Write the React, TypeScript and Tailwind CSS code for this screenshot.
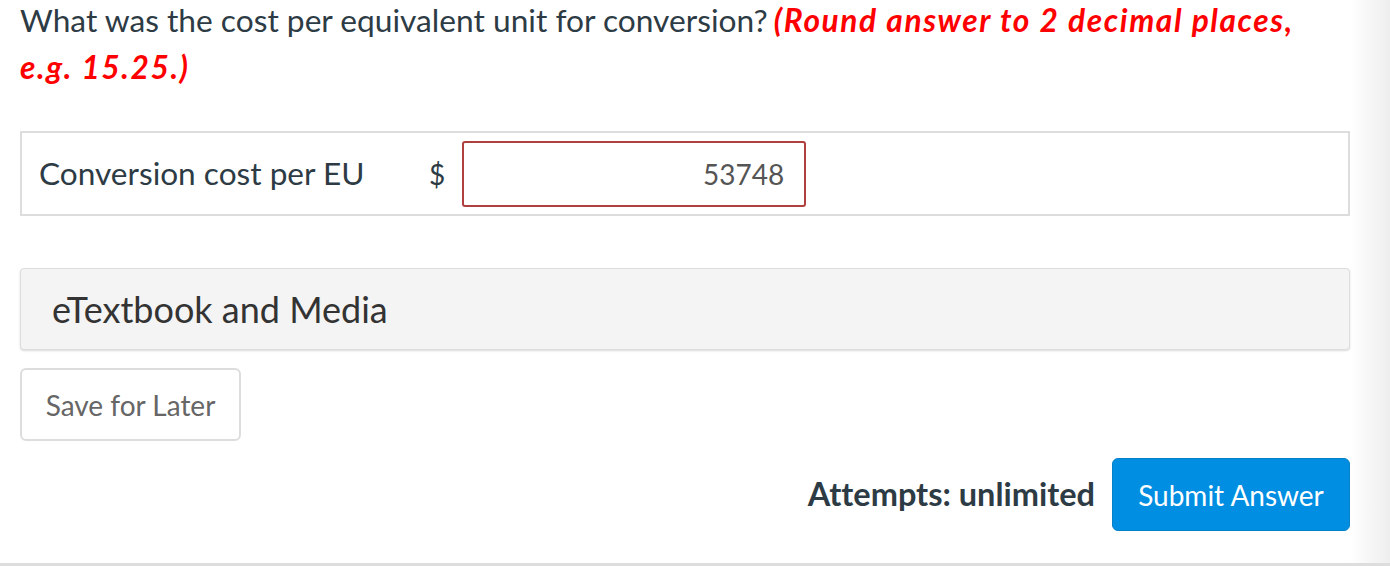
export default function App() {
  return (
    <div className="relative h-[566px] w-[1390px] overflow-hidden bg-white font-['Lato',sans-serif]">
      {/* right edge shading */}
      <div className="pointer-events-none absolute right-0 top-0 h-full w-[40px] bg-gradient-to-r from-white to-[#eeeeee]" />

      <div className="relative w-[1350px] pl-[20px]">
        {/* Question */}
        <p className="mt-[-3px] text-[31.7px] leading-[47px] text-[#2d3b45] [font-variant-ligatures:none]">
          What was the cost per equivalent unit for conversion?{' '}
          <span className="ml-[-2px] font-bold italic tracking-[1.6px] text-[#ff0000]">
            (Round answer to 2 decimal places,
            <br />
            e.g. 15.25.)
          </span>
        </p>

        {/* Answer row */}
        <div className="mt-[40px] flex h-[85px] items-center border-2 border-[#dddddd] pl-[17px]">
          <span className="w-[390px] text-[31.6px] text-[#2d3b45]">Conversion cost per EU</span>
          <span className="text-[28px] text-[#2d3b45]">$</span>
          <div className="ml-[17px] flex h-[66px] w-[344px] items-center justify-end rounded-[3px] border-2 border-[#b04040] pr-[20px]">
            <span className="text-[28px] text-[#555555]">53748</span>
          </div>
        </div>

        {/* eTextbook */}
        <div className="mt-[52px] flex h-[82px] items-center rounded-[4px] border border-[#dddddd] bg-[#f4f4f4] pl-[31px] shadow-[0_1px_2px_rgba(0,0,0,0.15)]">
          <span className="text-[36px] text-[#333333]">eTextbook and Media</span>
        </div>

        {/* Save for later */}
        <button className="mt-[18px] flex h-[73px] w-[221px] items-center justify-center rounded-[6px] border-2 border-[#dddddd] bg-white text-[28px] text-[#666666]">
          Save for Later
        </button>

        {/* Submit row */}
        <div className="mt-[17px] flex items-center justify-end">
          <span className="mr-[17px] text-[32.5px] font-bold text-[#2d3b45] [font-variant-ligatures:none]">
            Attempts: unlimited
          </span>
          <button className="flex h-[73px] w-[238px] items-center justify-center rounded-[6px] border border-[#0680c8] bg-[#008ee2] text-[28px] text-white">
            Submit Answer
          </button>
        </div>
      </div>

      {/* bottom rule */}
      <div className="absolute bottom-0 left-0 h-[3px] w-full bg-[#dddddd]" />
    </div>
  )
}
